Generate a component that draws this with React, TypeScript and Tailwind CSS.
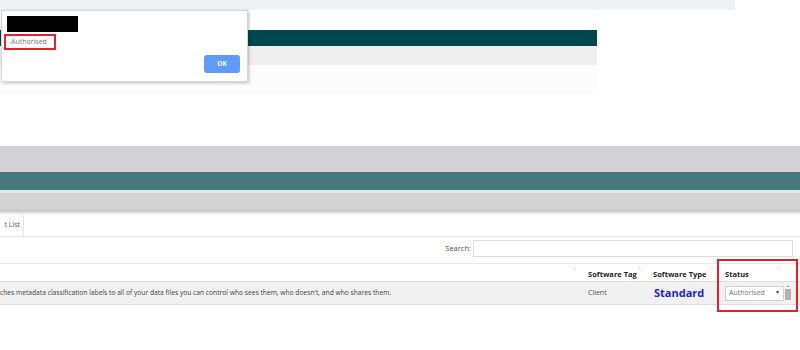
import React from 'react';

function SortIcon() {
  return <span className="absolute right-[4px] top-[1px] text-[6px] leading-none tracking-[-1px] text-[#c8c8c8]">↑↓</span>;
}

export default function App() {
  return (
    <div className="relative h-[350px] w-[800px] overflow-hidden bg-white font-['Open_Sans',sans-serif] text-[#333]">
      {/* background page, top part */}
      <div className="h-[10px] w-[735px] bg-[#f0f1f3]" />
      <div className="mt-[20px] h-[16px] w-[597px] bg-[#02464e]" />
      <div className="h-[19px] w-[597px] bg-[#efefef]" />
      <div className="h-[29px] w-[597px] bg-[#fcfcfc]" />

      {/* header bands */}
      <div className="mt-[52px] h-[26px] bg-[#d3d2d4]" />
      <div className="h-[18px] border-t border-[#5a6c6e] bg-[#46797b]" />
      <div className="h-[3px] bg-[#e3e6e6]" />
      <div className="h-[17px] bg-[#d2d2d2]" />
      <div className="h-[5px] bg-gradient-to-b from-[#bdbdbd] to-white" />

      {/* tabs */}
      <div className="mt-[1px] flex h-[21px] items-end border-b border-[#e6e6e6]">
        <div className="flex h-[21px] w-[24px] items-center justify-end whitespace-nowrap border-r border-[#e6e6e6] bg-white pr-[3px] text-[7px] text-[#555]">
          t List
        </div>
      </div>

      {/* search */}
      <div className="mt-[3px] flex items-center justify-end pr-[7px]">
        <span className="mr-[2px] text-[7.5px] text-[#555]">Search:</span>
        <div className="h-[17px] w-[320px] border border-[#dcdcdc] bg-white" />
      </div>

      {/* table */}
      <div className="mt-[6px] border-t border-[#e8e8e8]">
        <div className="flex h-[17px] items-end">
          <div className="relative h-full w-[580px]"><SortIcon /></div>
          <div className="relative flex h-full w-[66px] items-end pb-[1px] pl-[8px] text-[7.5px] font-bold text-[#222]">Software Tag<SortIcon /></div>
          <div className="relative flex h-full w-[71px] items-end pb-[1px] pl-[7px] text-[7.5px] font-bold text-[#222]">Software Type<SortIcon /></div>
          <div className="relative flex h-full w-[67px] items-end pb-[1px] pl-[8px] text-[7.5px] font-bold text-[#222]">Status<SortIcon /></div>
        </div>
        <div className="flex h-[24px] items-center border-y border-[#dedede] bg-[#f1f1f1]">
          <div className="w-[580px] whitespace-nowrap text-[6.7px] text-[#444]">
            ches metadata classification labels to all of your data files you can control who sees them, who doesn&apos;t, and who shares them.
          </div>
          <div className="w-[66px] pl-[8px] text-[7px] text-[#555]">Client</div>
          <div className="w-[71px] pl-[8px] text-[11px] font-bold text-[#1d1dd6]">Standard</div>
          <div className="flex w-[67px] items-center pl-[8px]">
            <div className="flex h-[15px] w-[59px] items-center justify-between border border-[#d0d0d0] bg-white px-[3px] text-[7px] text-[#777]">
              <span>Authorised</span>
              <span className="text-[5px] text-[#333]">▼</span>
            </div>
          </div>
          <div className="flex h-full w-[8px] flex-col items-center pt-[2px]">
            <span className="text-[4px] leading-none text-[#999]">▲</span>
            <div className="mt-[1px] h-[11px] w-[6px] bg-[#b3b3b3]" />
          </div>
        </div>
      </div>

      {/* red highlight around Status */}
      <div className="pointer-events-none absolute left-[717px] top-[259px] h-[53px] w-[81px] border-2 border-[#e0202a]" />

      {/* alert dialog */}
      <div className="absolute left-[1px] top-[10px] flex h-[72px] w-[247px] flex-col border border-[#d6d6d6] bg-white shadow-[1px_1px_3px_rgba(0,0,0,0.25)]">
        <div className="ml-[5px] mt-[5px] h-[16px] w-[71px] bg-black" />
        <div className="ml-[2px] mt-[2px] flex h-[16px] w-[52px] items-center border-2 border-[#e0202a] pl-[5px] text-[7px] text-[#777]">
          Authorised
        </div>
        <div className="mr-[7px] mt-[5px] flex justify-end">
          <div className="flex h-[18px] w-[36px] items-center justify-center rounded-[3px] bg-[#5e9cf7] text-[6.5px] font-bold text-white">OK</div>
        </div>
      </div>
    </div>
  );
}
